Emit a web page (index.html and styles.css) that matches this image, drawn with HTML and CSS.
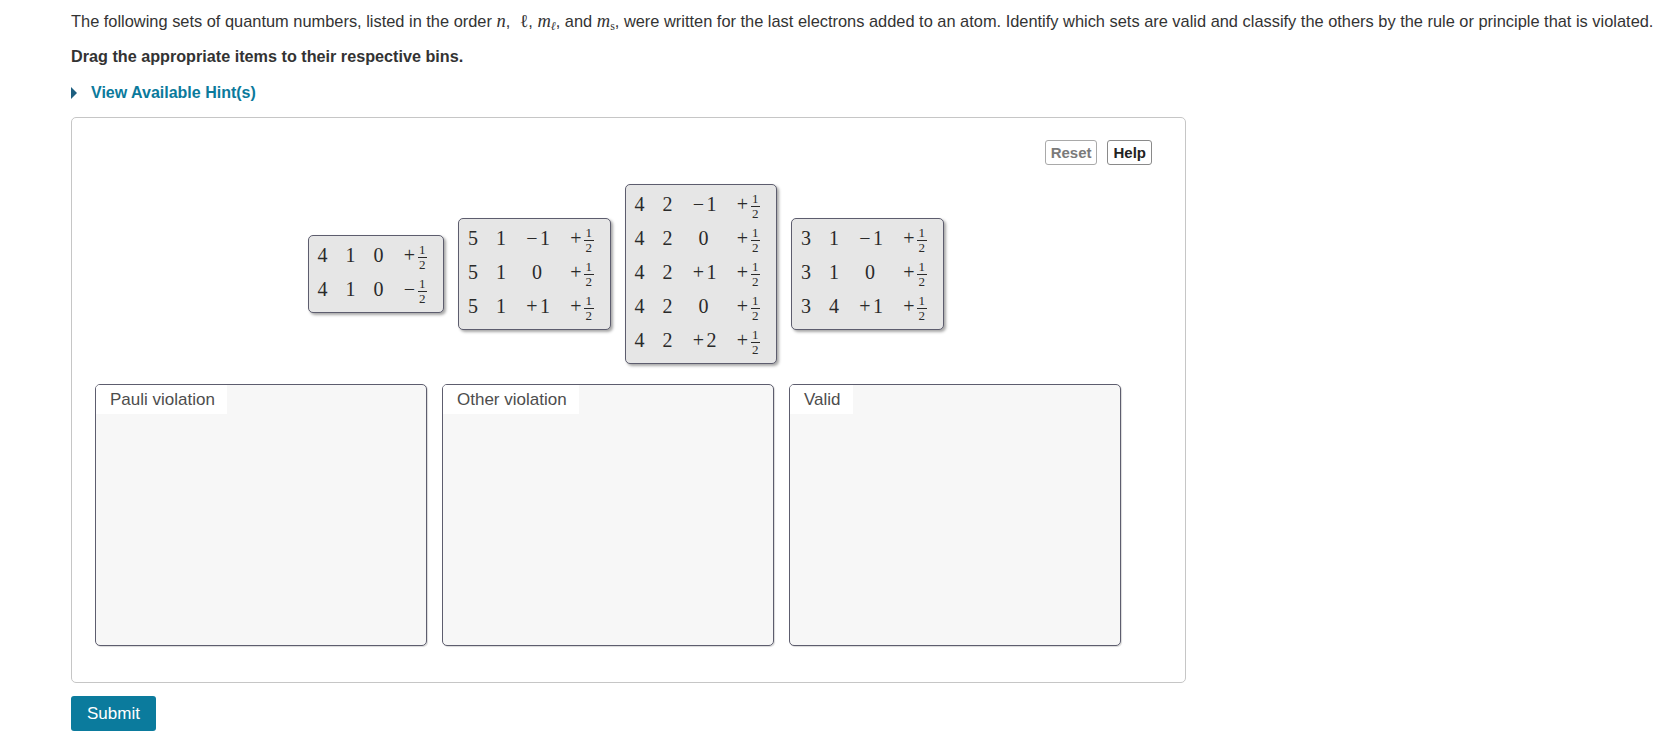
FILE: index.html
```html
<!DOCTYPE html>
<html lang="en">
<head>
<meta charset="utf-8">
<title>Quantum numbers</title>
<link rel="stylesheet" href="styles.css">
</head>
<body>
<div class="page">
  <p class="intro">The following sets of quantum numbers, listed in the order <span class="m"><i>n</i></span>,&nbsp; <span class="m">ℓ</span>, <span class="m"><i>m</i><sub>ℓ</sub></span>, and <span class="m"><i>m</i><sub class="up">s</sub></span>, were written for the last electrons added to an atom. Identify which sets are valid and classify the others by the rule or principle that is violated.</p>
  <p class="instr">Drag the appropriate items to their respective bins.</p>
  <div class="hint"><span class="tri"></span><span class="hint-link">View Available Hint(s)</span></div>

  <div class="panel">
    <div class="toolbar">
      <button class="btn reset">Reset</button>
      <button class="btn help">Help</button>
    </div>

    <div class="tiles">
      <div class="tile">
        <span>4</span><span>1</span><span>0</span><span><span class="op">+</span><span class="frac"><span class="num">1</span><span class="den">2</span></span></span>
        <span>4</span><span>1</span><span>0</span><span><span class="op">−</span><span class="frac"><span class="num">1</span><span class="den">2</span></span></span>
      </div>
      <div class="tile">
        <span>5</span><span>1</span><span><span class="op">−</span>1</span><span><span class="op">+</span><span class="frac"><span class="num">1</span><span class="den">2</span></span></span>
        <span>5</span><span>1</span><span>0</span><span><span class="op">+</span><span class="frac"><span class="num">1</span><span class="den">2</span></span></span>
        <span>5</span><span>1</span><span><span class="op">+</span>1</span><span><span class="op">+</span><span class="frac"><span class="num">1</span><span class="den">2</span></span></span>
      </div>
      <div class="tile">
        <span>4</span><span>2</span><span><span class="op">−</span>1</span><span><span class="op">+</span><span class="frac"><span class="num">1</span><span class="den">2</span></span></span>
        <span>4</span><span>2</span><span>0</span><span><span class="op">+</span><span class="frac"><span class="num">1</span><span class="den">2</span></span></span>
        <span>4</span><span>2</span><span><span class="op">+</span>1</span><span><span class="op">+</span><span class="frac"><span class="num">1</span><span class="den">2</span></span></span>
        <span>4</span><span>2</span><span>0</span><span><span class="op">+</span><span class="frac"><span class="num">1</span><span class="den">2</span></span></span>
        <span>4</span><span>2</span><span><span class="op">+</span>2</span><span><span class="op">+</span><span class="frac"><span class="num">1</span><span class="den">2</span></span></span>
      </div>
      <div class="tile">
        <span>3</span><span>1</span><span><span class="op">−</span>1</span><span><span class="op">+</span><span class="frac"><span class="num">1</span><span class="den">2</span></span></span>
        <span>3</span><span>1</span><span>0</span><span><span class="op">+</span><span class="frac"><span class="num">1</span><span class="den">2</span></span></span>
        <span>3</span><span>4</span><span><span class="op">+</span>1</span><span><span class="op">+</span><span class="frac"><span class="num">1</span><span class="den">2</span></span></span>
      </div>
    </div>

    <div class="bins">
      <div class="bin"><div class="label">Pauli violation</div></div>
      <div class="bin"><div class="label">Other violation</div></div>
      <div class="bin"><div class="label">Valid</div></div>
    </div>
  </div>

  <button class="submit">Submit</button>
</div>
</body>
</html>
```

FILE: styles.css
```css
html, body {
  margin: 0;
  padding: 0;
  background: #ffffff;
}

.page {
  padding: 11px 0 0 71px;
  font-family: "Liberation Sans", Arial, sans-serif;
  font-size: 16px;
  color: #333333;
}

.intro {
  margin: 0;
  line-height: 20px;
  font-size: 16.4px;
  white-space: nowrap;
}

.m {
  font-family: "Liberation Serif", "DejaVu Serif", serif;
  font-size: 18.5px;
}

.m i {
  font-style: italic;
}

.m sub {
  font-size: 12px;
  vertical-align: -3px;
  font-style: italic;
}

.m sub.up {
  font-style: normal;
}

.instr {
  margin: 10px 0 0 0;
  line-height: 20px;
  font-size: 16.2px;
  font-weight: bold;
}

.hint {
  margin-top: 17px;
  display: flex;
  align-items: center;
  line-height: 20px;
  height: 20px;
}

.tri {
  width: 0;
  height: 0;
  border-left: 6px solid #1d5f80;
  border-top: 6px solid transparent;
  border-bottom: 6px solid transparent;
  margin-right: 14px;
}

.hint-link {
  color: #0b7a9c;
  font-weight: bold;
}

.panel {
  margin-top: 14px;
  width: 1115px;
  box-sizing: border-box;
  border: 1px solid #c6c6c6;
  border-radius: 5px;
  padding: 22px 33px 36px 23px;
}

.toolbar {
  display: flex;
  justify-content: flex-end;
  gap: 10px;
}

.btn {
  font-family: "Liberation Sans", Arial, sans-serif;
  font-size: 15px;
  font-weight: bold;
  height: 25px;
  padding: 0 5px;
  background: #ffffff;
  border: 1px solid #a9a9a9;
  border-radius: 3px;
  line-height: 23px;
}

.btn.reset {
  color: #7a7a7a;
}

.btn.help {
  color: #222222;
  border-color: #8a8a8a;
}

.tiles {
  margin-top: 19px;
  height: 180px;
  display: flex;
  align-items: center;
  justify-content: center;
  gap: 14px;
  padding-left: 4px;
}

.tile {
  display: grid;
  grid-template-columns: repeat(4, auto);
  grid-auto-rows: 34px;
  column-gap: 18px;
  justify-items: center;
  padding: 2px 16px 6px 9px;
  background: #e6e6e6;
  border: 1px solid #5d5d6e;
  border-radius: 5px;
  box-shadow: 2px 2px 3px rgba(0, 0, 0, 0.35);
  font-family: "Liberation Serif", "DejaVu Serif", serif;
  font-size: 20px;
  line-height: 34px;
  color: #2a2a2a;
}

.op {
  display: inline-block;
  width: 0.8em;
  text-align: center;
}

.frac {
  display: inline-flex;
  flex-direction: column;
  align-items: stretch;
  vertical-align: 8px;
  font-size: 13px;
  line-height: 12px;
  text-align: center;
}

.num {
  border-bottom: 1px solid #2a2a2a;
  padding: 0 1.5px 1px;
}

.den {
  padding: 1px 1.5px 0;
}

.bins {
  margin-top: 20px;
  display: flex;
  gap: 15px;
}

.bin {
  width: 332px;
  height: 262px;
  box-sizing: border-box;
  border: 1px solid #5d5d6e;
  border-radius: 5px;
  background: #f7f7f7;
  box-shadow: 1px 1px 1px rgba(0, 0, 0, 0.15);
}

.label {
  display: inline-block;
  background: #ffffff;
  font-size: 17px;
  line-height: 29px;
  padding: 0 12px 0 14px;
  color: #4d4d4d;
  border-top-left-radius: 4px;
}

.submit {
  margin-top: 13px;
  height: 35px;
  padding: 0 16px;
  border: none;
  border-radius: 3px;
  background: #0b7b9d;
  color: #ffffff;
  font-family: "Liberation Sans", Arial, sans-serif;
  font-size: 17px;
}
```
